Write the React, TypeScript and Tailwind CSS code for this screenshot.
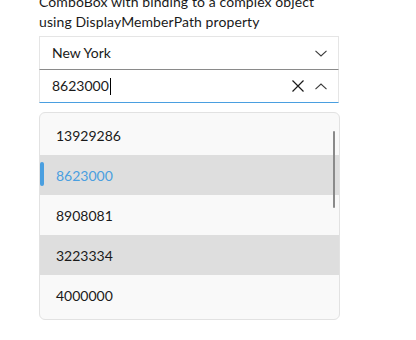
const items = [
  { id: "a", value: "13929286" },
  { id: "b", value: "8623000", selected: true },
  { id: "c", value: "8908081" },
  { id: "d", value: "3223334", hover: true },
  { id: "e", value: "4000000" },
];

function ChevronDown() {
  return (
    <svg width="12" height="7" viewBox="0 0 12 7" fill="none">
      <path d="M0.5 0.8L6 6L11.5 0.8" stroke="#3a3a3a" strokeWidth="1.1" />
    </svg>
  );
}

function ChevronUp() {
  return (
    <svg width="12" height="7" viewBox="0 0 12 7" fill="none">
      <path d="M0.5 6.2L6 1L11.5 6.2" stroke="#3a3a3a" strokeWidth="1.1" />
    </svg>
  );
}

function ClearIcon() {
  return (
    <svg width="12" height="12" viewBox="0 0 12 12" fill="none">
      <path d="M0.5 0.5L11.5 11.5M11.5 0.5L0.5 11.5" stroke="#1a1a1a" strokeWidth="1.2" />
    </svg>
  );
}

export default function App() {
  return (
    <div
      className="w-[416px] h-[340px] bg-white overflow-hidden text-[#1a1a1a]"
      style={{ fontFamily: "Lato, 'Noto Sans', sans-serif" }}
    >
      <div className="ml-[39px] w-[301px] -mt-[8px]">
        <p className="text-[14px] leading-[20px] tracking-[0.1px]">
          ComboBox with binding to a complex object
          <br />
          using DisplayMemberPath property
        </p>

        <div className="mt-[4px] w-[300px] h-[34px] flex items-center justify-between border border-[#e5e5e5] border-b-[#8a8a8a] bg-white pl-[12px] pr-[11px]">
          <span className="text-[14px] leading-[20px]">New York</span>
          <ChevronDown />
        </div>

        <div className="w-[300px] h-[33px] flex items-center justify-between border border-t-0 border-[#e5e5e5] border-b-[#4a9fe0] bg-white pl-[12px] pr-[11px]">
          <span className="flex items-center text-[14px] leading-[20px]">
            8623000
            <span className="inline-block w-[1px] h-[17px] bg-black ml-[1px]" />
          </span>
          <div className="flex items-center gap-[11px]">
            <ClearIcon />
            <ChevronUp />
          </div>
        </div>

        <div className="relative mt-[9px] w-[301px] rounded-[6px] border border-[#e2e2e2] bg-[#f9f9f9] pt-[2px] pb-[4px] overflow-hidden">
          {items.map((item) => (
            <div
              key={item.id}
              className={`relative h-[40px] flex items-center pl-[16px] text-[14px] ${
                item.selected || item.hover ? "bg-[#dedede]" : ""
              } ${item.selected ? "text-[#4a9fe0]" : "text-[#1a1a1a]"}`}
            >
              {item.selected && (
                <span className="absolute left-0 top-[7px] w-[4px] h-[24px] rounded-full bg-[#4a9fe0]" />
              )}
              {item.value}
            </div>
          ))}
          <div className="absolute right-[4px] top-[18px] w-[2px] h-[77px] rounded-full bg-[#8a8a8a]" />
        </div>
      </div>
    </div>
  );
}
